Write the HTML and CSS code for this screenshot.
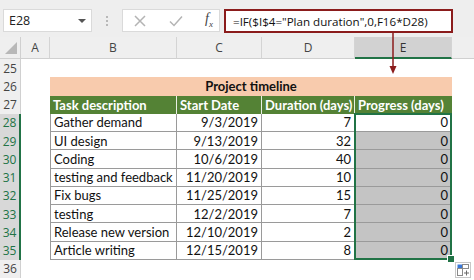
FILE: index.html
```html
<!DOCTYPE html>
<html>
<head>
<meta charset="utf-8">
<link rel="stylesheet" href="styles.css">
</head>
<body>
<div class="app">
  <div class="topbar">
    <div class="namebox"><span class="ref">E28</span><span class="dd"></span></div>
    <div class="sep"><i></i><i></i><i></i></div>
    <div class="fbtns">
      <svg class="ic" width="14" height="14" viewBox="0 0 14 14"><path d="M2 2L12 12M12 2L2 12" stroke="#b4b4b4" stroke-width="1.5" fill="none"/></svg>
      <svg class="ic" width="16" height="14" viewBox="0 0 16 14"><path d="M2 7.5L6 11.5L14 2.5" stroke="#b4b4b4" stroke-width="1.5" fill="none"/></svg>
      <span class="fx">f<sub>x</sub></span>
    </div>
    <div class="formula">=IF($I$4="Plan duration",0,F16*D28)</div>
  </div>
  <div class="sheet">
    <div class="row head">
      <div class="corner"><svg width="12" height="12" viewBox="0 0 12 12"><path d="M12 0V12H0Z" fill="#b8b8b8"/></svg></div>
      <div class="ch">A</div><div class="ch">B</div><div class="ch">C</div><div class="ch">D</div><div class="ch sel">E</div><div class="ch last"></div>
    </div>
    <div class="row"><div class="rh">25</div></div>
    <div class="row"><div class="rh">26</div><div class="c"></div><div class="title">Project timeline</div></div>
    <div class="row"><div class="rh">27</div><div class="c"></div><div class="th">Task description</div><div class="th">Start Date</div><div class="th">Duration (days)</div><div class="th">Progress (days)</div></div>
    <div class="row"><div class="rh on">28</div><div class="c"></div><div class="td first">Gather demand</div><div class="td num">9/3/2019</div><div class="td num">7</div><div class="td num act">0</div></div>
    <div class="row"><div class="rh on">29</div><div class="c"></div><div class="td first">UI design</div><div class="td num">9/13/2019</div><div class="td num">32</div><div class="td num grey">0</div></div>
    <div class="row"><div class="rh on">30</div><div class="c"></div><div class="td first">Coding</div><div class="td num">10/6/2019</div><div class="td num">40</div><div class="td num grey">0</div></div>
    <div class="row"><div class="rh on">31</div><div class="c"></div><div class="td first">testing and feedback</div><div class="td num">11/20/2019</div><div class="td num">10</div><div class="td num grey">0</div></div>
    <div class="row"><div class="rh on">32</div><div class="c"></div><div class="td first">Fix bugs</div><div class="td num">11/25/2019</div><div class="td num">15</div><div class="td num grey">0</div></div>
    <div class="row"><div class="rh on">33</div><div class="c"></div><div class="td first">testing</div><div class="td num">12/2/2019</div><div class="td num">7</div><div class="td num grey">0</div></div>
    <div class="row"><div class="rh on">34</div><div class="c"></div><div class="td first">Release new version</div><div class="td num">12/10/2019</div><div class="td num">2</div><div class="td num grey">0</div></div>
    <div class="row"><div class="rh on">35</div><div class="c"></div><div class="td first">Article writing</div><div class="td num">12/15/2019</div><div class="td num">8</div><div class="td num grey">0</div></div>
    <div class="row"><div class="rh">36</div></div>

    <div class="selection"><span class="handle"></span></div>
    <svg class="qa" width="16" height="16" viewBox="0 0 16 16">
      <rect x="0.5" y="0.5" width="15" height="15" fill="#fff" stroke="#c8c8c8"/>
      <rect x="2.5" y="2.5" width="5" height="4" fill="#3b78d8"/>
      <rect x="7.5" y="2.5" width="6" height="4" fill="none" stroke="#8a8a8a"/>
      <rect x="2.5" y="6.5" width="5" height="7" fill="none" stroke="#8a8a8a"/>
      <path d="M9 11H14M11.5 8.5V13.5" stroke="#6a6a6a" stroke-width="1"/>
    </svg>
  </div>
  <svg class="arrow" width="12" height="44" viewBox="0 0 12 44">
    <path d="M6 0V36" stroke="#8b1c1c" stroke-width="1.5"/>
    <path d="M2.5 34L6 42L9.5 34Z" fill="#8b1c1c"/>
  </svg>
</div>
</body>
</html>
```
FILE: styles.css
```css
html, body {
  margin: 0;
  padding: 0;
  background: #fff;
}
.app {
  position: relative;
  width: 474px;
  height: 280px;
  overflow: hidden;
  font-family: Lato, "Liberation Sans", sans-serif;
}
.topbar {
  height: 37px;
  background: #eeeeee;
  display: flex;
  align-items: flex-start;
  padding-top: 9px;
  box-sizing: border-box;
}
.namebox {
  margin-left: 3px;
  width: 89px;
  height: 23px;
  box-sizing: border-box;
  background: #fff;
  border: 1px solid #dadada;
  display: flex;
  align-items: center;
  justify-content: space-between;
  padding: 0 5px 0 5px;
  font-family: "Open Sans", sans-serif;
  font-size: 12.5px;
  color: #222;
}
.dd {
  width: 0;
  height: 0;
  border-left: 4px solid transparent;
  border-right: 4px solid transparent;
  border-top: 4px solid #555;
}
.sep {
  width: 30px;
  height: 23px;
  display: flex;
  flex-direction: column;
  align-items: center;
  justify-content: center;
  gap: 2px;
}
.sep i {
  width: 2px;
  height: 2px;
  background: #b8b8b8;
}
.fbtns {
  width: 98px;
  height: 23px;
  box-sizing: border-box;
  background: #fff;
  border: 1px solid #dadada;
  display: flex;
  align-items: center;
  justify-content: space-between;
  padding: 0 6px 0 10px;
}
.fx {
  font-family: "Liberation Serif", serif;
  font-style: italic;
  font-size: 14px;
  color: #444;
  line-height: 1;
}
.fx sub {
  font-size: 9px;
}
.formula {
  margin-left: 4px;
  width: 229px;
  height: 24px;
  box-sizing: border-box;
  background: #fff;
  border: 2px solid #8b1c1c;
  display: flex;
  align-items: center;
  padding-left: 7px;
  font-family: "Open Sans", sans-serif;
  font-size: 11.6px;
  color: #111;
  white-space: nowrap;
}
.sheet {
  position: relative;
}
.row {
  display: grid;
  grid-template-columns: 21px 29px 127px 85px 93px 97px 22px;
  height: 18.25px;
}
.row.head {
  height: 22px;
  background: #efefef;
}
.corner {
  display: flex;
  align-items: flex-end;
  justify-content: flex-end;
  padding: 0 3px 4px 0;
  border-right: 1px solid #d0d0d0;
  border-bottom: 1px solid #d0d0d0;
}
.ch {
  display: flex;
  align-items: center;
  justify-content: center;
  font-family: "Open Sans", sans-serif;
  font-size: 12px;
  color: #444;
  border-right: 1px solid #d4d4d4;
  border-bottom: 1px solid #d0d0d0;
}
.ch.sel {
  background: #d2d2d2;
  border-bottom: 2px solid #217346;
  color: #333;
}
.ch.last {
  border-right: none;
}
.rh {
  background: #efefef;
  border-right: 1px solid #d0d0d0;
  display: flex;
  align-items: center;
  justify-content: center;
  font-family: "Open Sans", sans-serif;
  font-size: 12px;
  color: #444;
}
.rh.on {
  background: #d8d8d8;
  color: #217346;
  border-right: 2px solid #217346;
}
.title {
  grid-column: 3 / 7;
  background: #f8cbad;
  display: flex;
  align-items: center;
  justify-content: center;
  font-weight: bold;
  font-size: 13px;
  color: #111;
}
.th {
  background: #548235;
  color: #fff;
  font-weight: bold;
  font-size: 13px;
  display: flex;
  align-items: center;
  padding-left: 3px;
  border-right: 1px solid #e8efe3;
  white-space: nowrap;
  overflow: hidden;
}
.th:last-child {
  border-right: none;
}
.td {
  display: flex;
  align-items: center;
  font-size: 13px;
  color: #111;
  border-right: 1px solid #9a9a9a;
  border-bottom: 1px solid #9a9a9a;
  padding-left: 3px;
  white-space: nowrap;
  overflow: hidden;
}
.td.first {
  border-left: 1px solid #9a9a9a;
}
.td.num {
  justify-content: flex-end;
  padding-right: 3px;
  padding-left: 0;
}
.td.grey {
  background: #c4c4c4;
}
.selection {
  position: absolute;
  left: 354px;
  top: 76px;
  width: 98px;
  height: 147px;
  border: 2px solid #217346;
  box-sizing: border-box;
}
.handle {
  position: absolute;
  right: -5px;
  bottom: -5px;
  width: 6px;
  height: 6px;
  background: #217346;
  border: 1px solid #fff;
}
.qa {
  position: absolute;
  left: 455px;
  top: 225px;
}
.arrow {
  position: absolute;
  left: 387px;
  top: 32px;
}
```
